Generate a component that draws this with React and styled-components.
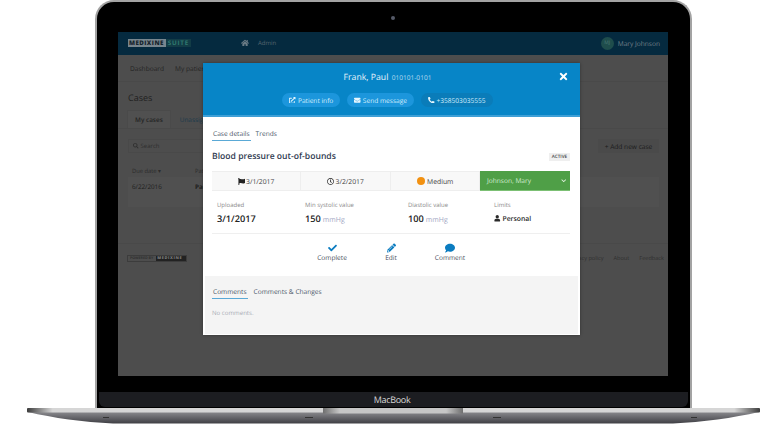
import React from "react";
import styled, { createGlobalStyle } from "styled-components";
import {
  FaHome, FaSearch, FaExternalLinkAlt, FaEnvelope, FaPhoneAlt, FaFlag, FaRegClock,
  FaUser, FaCheck, FaPencilAlt, FaComment, FaTimes, FaChevronDown,
} from "react-icons/fa";

const Global = createGlobalStyle`
  html, body { margin: 0; padding: 0; background: #fff; }
  body { font-family: "Open Sans", "Liberation Sans", sans-serif; text-rendering: geometricPrecision; white-space: nowrap; }
  * { box-sizing: border-box; }
`;

const Stage = styled.div`
  width: 774px; height: 424px; overflow: hidden; background: #fff;
  padding-left: 13px; display: flex; flex-direction: column; align-items: center;
`;
const Lid = styled.div`
  width: 597px; height: 408px; flex: none; background: #000;
  border: 2px solid #a3a3a3; border-bottom: 0; border-radius: 19px 19px 0 0;
  display: flex; flex-direction: column;
`;
const CameraRow = styled.div`
  height: 30px; flex: none; display: flex; align-items: center; justify-content: center;
  padding-right: 1px;
`;
const Camera = styled.span`
  width: 4px; height: 4px; border-radius: 50%; background: #555a68; margin-top: 1px;
`;
const Screen = styled.div`
  position: relative; height: 344px; flex: none; margin: 0 22px 0 21px; background: #4d4d4d;
  display: flex; flex-direction: column; overflow: hidden; color: #242424;
`;
const Chin = styled.div`
  height: 15px; margin: 16px 2px 0; flex: none; background: #1c1d21; border-radius: 0 0 6px 6px;
  color: #d8d8d8; font: 400 9px "Open Sans", sans-serif; letter-spacing: -.3px;
  display: flex; align-items: center; justify-content: center; padding: 0 3px 1px 0;
`;
const Base = styled.svg`display: block; width: 761px; height: 16px; flex: none;`;

const TopBar = styled.div`
  height: 23px; flex: none; background: #052a3f; display: flex; align-items: center;
  padding: 0 8px 1px 10px; color: #56666f; font-size: 6px;
`;
const Logo = styled.div`display: flex; align-items: stretch; height: 8px; width: 63px; margin-right: 50px;`;
const LogoMain = styled.span`
  background: #78868e; color: #16242c; font-weight: 800; font-size: 6.2px; line-height: 8px;
  padding: 0 1px; letter-spacing: .45px; width: 39px;
`;
const LogoSub = styled.span`
  background: #123c46; color: #2f7a70; font-weight: 700; font-size: 6.2px; line-height: 8px;
  padding: 0 2px; letter-spacing: .8px; flex: 1;
`;
const TopIcon = styled.span`display: flex; color: #6b7b85; font-size: 8px; margin-right: 9px;`;
const Spacer = styled.span`flex: 1;`;
const Avatar = styled.span`
  width: 13px; height: 13px; border-radius: 50%; background: #1f4d4c; color: #4d7c78; font-size: 5px;
  display: flex; align-items: center; justify-content: center; margin-right: 4px;
`;
const UserName = styled.span`color: #748089; font-size: 6.6px;`;
const Nav = styled.div`
  height: 27px; flex: none; border-bottom: 1px solid #494949; display: flex; align-items: center;
  gap: 11px; padding-left: 12px; font-size: 6.6px;
`;
const Content = styled.div`padding: 0 9px 0 10px; flex: none;`;
const Heading = styled.div`font-size: 9px; line-height: 15px; margin-top: 8px; color: #1f1f1f;`;
const ScreenTabs = styled.div`
  display: flex; margin-top: 5px; height: 19px; border-bottom: 1px solid #494949; margin-right: -9px; margin-left: -10px; padding-left: 9px;
`;
const ScreenTab = styled.div`
  font-size: 6.4px; padding: 0 7px; display: flex; align-items: center;
  ${p => p.$active ? "background:#505050;border:1px solid #4a4a4a;border-bottom:0;font-weight:600;" : "color:#1c3a4c;padding-left:9px;"}
`;
const Toolbar = styled.div`display: flex; justify-content: space-between; margin-top: 10px; height: 14px;`;
const SearchBox = styled.div`
  width: 120px; border: 1px solid #494949; font-size: 6px; color: #2f2f2f;
  display: flex; align-items: center; gap: 2px; padding-left: 4px; svg { font-size: 5.5px; }
`;
const AddButton = styled.div`
  width: 61px; background: #4a4a4a; color: #1b1b1b; font-size: 6.6px;
  display: flex; align-items: center; justify-content: center;
`;
const TableHead = styled.div`
  display: flex; font-size: 5.8px; color: #2b2b2b; margin-top: 11px; height: 13px; padding-left: 4px; align-items: center;
`;
const HeadCell = styled.span`width: 63px;`;
const TableRow = styled.div`
  display: flex; height: 30px; background: #505050; padding: 5px 0 0 4px; font-size: 6.3px; color: #1d1d1d;
`;
const RowCell = styled.span`width: 63px; font-weight: ${p => p.$bold ? 700 : 400};`;
const ScreenFoot = styled.div`
  margin-top: 36px; border-top: 1px solid #494949; height: 29px; flex: none;
  display: flex; align-items: center; padding: 0 4px 0 9px; font-size: 5.6px; color: #303030; gap: 10px;
`;
const Powered = styled.span`
  border: 1px solid #3c3c3c; font-size: 3.6px; font-weight: 700; height: 7px; line-height: 5px; padding-left: 2px;
  display: flex; gap: 3px; width: 60px;
`;
const PoweredLogo = styled.span`background: #222; color: #7c7c7c; flex: 1; font-weight: 800; padding-left: 1px; letter-spacing: .6px; font-size: 4px;`;

const Modal = styled.div`
  position: absolute; left: 85px; top: 31px; width: 377px; height: 272px; background: #fff;
  display: flex; flex-direction: column; color: #333e52;
  box-shadow: 0 0 3px rgba(0,0,0,.35);
`;
const ModalHead = styled.div`
  position: relative; height: 54px; flex: none; background: #0785c7; border-bottom: 2px solid #3e9fd6;
  display: flex; flex-direction: column; align-items: center; color: #fff; padding-right: 8px;
`;
const Title = styled.div`margin-top: 7px; line-height: 14px; font-size: 8.7px; color: #e9f4fb;`;
const TitleId = styled.span`font-size: 6.6px; color: #b5d9ef; margin-left: 1px;`;
const Pills = styled.div`display: flex; gap: 7px; margin-top: 8px;`;
const Pill = styled.div`
  height: 14px; border-radius: 7px; padding: 0 7px; display: flex; align-items: center; gap: 2px;
  font-size: 6.6px; color: #d4edfb; background: ${p => p.$plain ? "#0a7cb9" : "#1c96dc"};
  svg { font-size: 6.5px; color: #e8f6fd; }
`;
const Close = styled.span`position: absolute; right: 11px; top: 8px; font-size: 11px; display: flex;`;
const ModalBody = styled.div`flex: 1; padding: 0 10px 0 9px; display: flex; flex-direction: column;`;
const TabRow = styled.div`display: flex; gap: ${p => p.$gap}px; margin-top: ${p => p.$top}px; height: 15px;`;
const Tab = styled.div`
  font-size: 6.6px; color: #4a5568; padding: 0 1px; height: 15px; line-height: 15px;
  border-bottom: ${p => p.$active ? "1.5px solid #5aa9d6" : "0"};
`;
const CaseHead = styled.div`display: flex; justify-content: space-between; align-items: center; margin-top: 7px; height: 16px;`;
const CaseTitle = styled.div`font-size: 8.6px; font-weight: 600; color: #2f3a50;`;
const Badge = styled.div`
  background: #efefef; color: #444; font-size: 4.6px; font-weight: 600; height: 8px; width: 21px; margin-top: 1px;
  display: flex; align-items: center; justify-content: center;
`;
const MetaRow = styled.div`
  display: grid; grid-template-columns: 89px 90px 89px 90px; height: 20px; margin-top: 7px;
  background: #f8f8f8; border-top: 1px solid #eee; border-bottom: 1px solid #eee;
`;
const MetaCell = styled.div`
  display: flex; align-items: center; justify-content: center; gap: 1.5px; font-size: 6.8px; color: #3e3e3e;
  border-right: 1px solid #eee; svg { font-size: 7px; color: #222; }
`;
const Dot = styled.span`width: 8px; height: 8px; border-radius: 50%; background: #f29111; margin-right: 1px;`;
const Assignee = styled.div`
  background: #4f9f47; color: #d5ecd2; font-size: 6.6px; display: flex; align-items: center; justify-content: space-between;
  padding: 0 4px 0 7px; margin: -1px 0; border-bottom: 1px solid #7cc074; svg { font-size: 5.5px; color: #e8f5e6; }
`;
const Details = styled.div`
  display: grid; grid-template-columns: 88px 103px 86px 1fr; padding: 9px 0 0 5px; height: 43px; border-bottom: 1px solid #efefef;
`;
const Label = styled.div`font-size: 6px; color: #8a8a8a; line-height: 10px;`;
const Value = styled.div`font-size: 9.2px; font-weight: 600; color: #222; line-height: 15px; margin-top: 1px; display: flex; align-items: baseline; gap: 2px;`;
const Unit = styled.span`font-size: 7px; font-weight: 400; color: #a3a8c4;`;
const Limit = styled.div`font-size: 6.8px; font-weight: 600; color: #2a2a2a; line-height: 15px; margin-top: 1px; display: flex; align-items: center; gap: 2px; svg { font-size: 6.5px; }`;
const Actions = styled.div`display: flex; justify-content: center; margin-top: 9px;`;
const Action = styled.div`
  width: 59px; display: flex; flex-direction: column; align-items: center; font-size: 6.6px; color: #4a4f5c; line-height: 10px;
  svg { font-size: ${p => p.$size}px; color: #0b7cc0; height: 10px; }
`;
const ModalFoot = styled.div`
  height: 58px; flex: none; background: #f4f4f4; margin: 0 2px 1px; padding: 0 8px 0 7px;
`;
const NoComments = styled.div`font-size: 6.1px; color: #a9adb6; margin-top: 9px; line-height: 10px;`;

export default function App() {
  return (
    <Stage>
      <Global />
      <Lid>
        <CameraRow><Camera /></CameraRow>
        <Screen>
          <TopBar>
            <Logo><LogoMain>MEDIXINE</LogoMain><LogoSub>SUITE</LogoSub></Logo>
            <TopIcon><FaHome /></TopIcon>
            <span>Admin</span>
            <Spacer />
            <Avatar>MJ</Avatar>
            <UserName>Mary Johnson</UserName>
          </TopBar>
          <Nav><span>Dashboard</span><span>My patients</span></Nav>
          <Content>
            <Heading>Cases</Heading>
            <ScreenTabs>
              <ScreenTab $active>My cases</ScreenTab>
              <ScreenTab>Unassigned</ScreenTab>
            </ScreenTabs>
            <Toolbar>
              <SearchBox><FaSearch /> Search</SearchBox>
              <AddButton>+ Add new case</AddButton>
            </Toolbar>
            <TableHead><HeadCell>Due date ▾</HeadCell><span>Patient</span></TableHead>
            <TableRow><RowCell>6/22/2016</RowCell><RowCell $bold>Paul</RowCell></TableRow>
          </Content>
          <ScreenFoot>
            <Powered>POWERED BY <PoweredLogo>MEDIXINE</PoweredLogo></Powered>
            <Spacer />
            <span>Privacy policy</span><span>About</span><span>Feedback</span>
          </ScreenFoot>
          <Modal>
            <ModalHead>
              <Title>Frank, Paul <TitleId>010101-0101</TitleId></Title>
              <Close><FaTimes /></Close>
              <Pills>
                <Pill><FaExternalLinkAlt /> Patient info</Pill>
                <Pill><FaEnvelope /> Send message</Pill>
                <Pill $plain><FaPhoneAlt /> +358503035555</Pill>
              </Pills>
            </ModalHead>
            <ModalBody>
              <TabRow $gap={4} $top={9}>
                <Tab $active>Case details</Tab>
                <Tab>Trends</Tab>
              </TabRow>
              <CaseHead>
                <CaseTitle>Blood pressure out-of-bounds</CaseTitle>
                <Badge>ACTIVE</Badge>
              </CaseHead>
              <MetaRow>
                <MetaCell><FaFlag /> 3/1/2017</MetaCell>
                <MetaCell><FaRegClock /> 3/2/2017</MetaCell>
                <MetaCell><Dot /> Medium</MetaCell>
                <Assignee>Johnson, Mary <FaChevronDown /></Assignee>
              </MetaRow>
              <Details>
                <div><Label>Uploaded</Label><Value>3/1/2017</Value></div>
                <div><Label>Min systolic value</Label><Value>150 <Unit>mmHg</Unit></Value></div>
                <div><Label>Diastolic value</Label><Value>100 <Unit>mmHg</Unit></Value></div>
                <div><Label>Limits</Label><Limit><FaUser /> Personal</Limit></div>
              </Details>
              <Actions>
                <Action $size={9}><FaCheck />Complete</Action>
                <Action $size={9}><FaPencilAlt />Edit</Action>
                <Action $size={10}><FaComment />Comment</Action>
              </Actions>
            </ModalBody>
            <ModalFoot>
              <TabRow $gap={5} $top={8}>
                <Tab $active>Comments</Tab>
                <Tab>Comments &amp; Changes</Tab>
              </TabRow>
              <NoComments>No comments.</NoComments>
            </ModalFoot>
          </Modal>
        </Screen>
        <Chin>MacBook</Chin>
      </Lid>
      <Base viewBox="0 0 761 16">
        <defs>
          <linearGradient id="body" x1="0" y1="0" x2="0" y2="1">
            <stop offset="0" stopColor="#8a8a8e" />
            <stop offset="1" stopColor="#3f3f44" />
          </linearGradient>
          <linearGradient id="band" x1="0" y1="0" x2="1" y2="0">
            <stop offset="0" stopColor="#3c3c3c" />
            <stop offset=".035" stopColor="#d6d6d6" />
            <stop offset=".965" stopColor="#d6d6d6" />
            <stop offset="1" stopColor="#3c3c3c" />
          </linearGradient>
          <linearGradient id="notch" x1="0" y1="0" x2="1" y2="0">
            <stop offset="0" stopColor="#6f6f6f" />
            <stop offset=".12" stopColor="#c6c6c6" />
            <stop offset=".88" stopColor="#c6c6c6" />
            <stop offset="1" stopColor="#6f6f6f" />
          </linearGradient>
        </defs>
        <path d="M15 4 L746 4 C720 10 690 14 660 15.5 L100 15.5 C70 14 40 10 15 4Z" fill="url(#body)" />
        <rect x="14" y="0" width="733" height="4.5" rx="1" fill="url(#band)" />
        <rect x="310" y="0" width="140" height="5.5" fill="url(#notch)" />
        <rect x="90" y="9" width="6" height="1" fill="#333" />
        <rect x="292" y="9" width="8" height="1" fill="#333" />
        <rect x="480" y="9" width="8" height="1" fill="#333" />
        <rect x="678" y="9" width="6" height="1" fill="#333" />
      </Base>
    </Stage>
  );
}
